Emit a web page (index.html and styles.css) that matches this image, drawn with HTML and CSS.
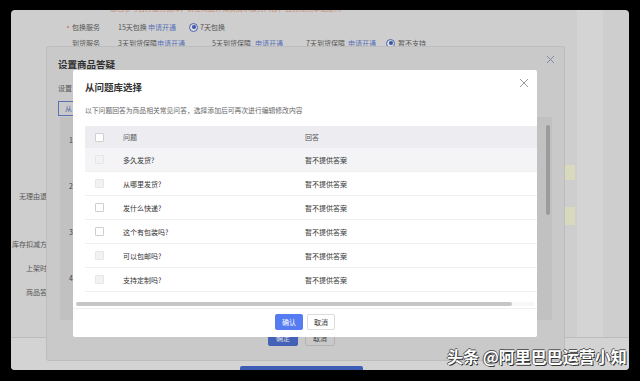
FILE: index.html
```html
<!DOCTYPE html>
<html lang="zh-CN">
<head>
    <meta charset="UTF-8">
    <meta name="viewport" content="width=device-width, initial-scale=1.0">
    <title>从问题库选择</title>
    <link rel="stylesheet" href="styles.css">
</head>
<body>
    <div class="screen">
        <div class="page">
            <div class="notice">您已参与官方服务保障，请在商品详情页展示服务内容，且需按照承诺履约</div>
            <div class="svc-row first">
                <span class="c w5 star"><i class="dot"></i></span>
                <span class="c w46">包换服务</span>
                <span class="c w30">15天包换</span>
                <span class="c w41 link">申请开通</span>
                <span class="c w11 radio-cell"><i class="radio"></i></span>
                <span class="c">7天包换</span>
            </div>
            <div class="svc-row">
                <span class="c w5"></span>
                <span class="c w46">到货服务</span>
                <span class="c w39">3天到货保障</span>
                <span class="c w55 link">申请开通</span>
                <span class="c w43">5天到货保障</span>
                <span class="c w51 link">申请开通</span>
                <span class="c w42">7天到货保障</span>
                <span class="c w38 link">申请开通</span>
                <span class="c w12 radio-cell"><i class="radio"></i></span>
                <span class="c">暂不支持</span>
            </div>
            <div class="form">
                <div class="labels">
                    <span class="l1">无理由退</span>
                    <span class="l2">库存扣减方</span>
                    <span>上架时</span>
                    <span>商品答</span>
                </div>
                <div class="tips">
                    <div class="tip t1"></div>
                    <div class="tip t2"></div>
                </div>
            </div>
            <div class="page-foot">
                <div class="page-btn"></div>
            </div>
        </div>

        <div class="qa">
            <div class="qa-head">
                <span class="qa-title">设置商品答疑</span>
                <svg class="qa-close" width="9" height="9" viewBox="0 0 9 9"><path d="M1 1L8 8M8 1L1 8" stroke="#7d88a3" stroke-width="1"/></svg>
            </div>
            <div class="qa-sub">设置</div>
            <div class="qa-from">从</div>
            <div class="qa-panel">
                <span class="num">1</span>
                <span class="num">2</span>
                <span class="num">3</span>
                <span class="num">4</span>
            </div>
            <div class="qa-foot">
                <span class="qa-btn primary">确定</span>
                <span class="qa-btn">取消</span>
            </div>
            <div class="qa-scroll"></div>
        </div>

        <div class="lib">
            <div class="lib-head">
                <span class="lib-title">从问题库选择</span>
                <svg class="lib-close" width="10" height="10" viewBox="0 0 10 10"><path d="M1 1L9 9M9 1L1 9" stroke="#9a9a9a" stroke-width="1"/></svg>
            </div>
            <div class="lib-desc">以下问题回答为商品相关常见问答，选择添加后可再次进行编辑修改内容</div>
            <div class="lib-table">
                <div class="tr head">
                    <span class="cell-check"><i class="box"></i></span>
                    <span class="cell-q">问题</span>
                    <span>回答</span>
                </div>
                <div class="tr hover">
                    <span class="cell-check"><i class="box off"></i></span>
                    <span class="cell-q">多久发货?</span>
                    <span>暂不提供答案</span>
                </div>
                <div class="tr">
                    <span class="cell-check"><i class="box off"></i></span>
                    <span class="cell-q">从哪里发货?</span>
                    <span>暂不提供答案</span>
                </div>
                <div class="tr">
                    <span class="cell-check"><i class="box"></i></span>
                    <span class="cell-q">发什么快递?</span>
                    <span>暂不提供答案</span>
                </div>
                <div class="tr">
                    <span class="cell-check"><i class="box"></i></span>
                    <span class="cell-q">这个有包装吗?</span>
                    <span>暂不提供答案</span>
                </div>
                <div class="tr">
                    <span class="cell-check"><i class="box off"></i></span>
                    <span class="cell-q">可以包邮吗?</span>
                    <span>暂不提供答案</span>
                </div>
                <div class="tr">
                    <span class="cell-check"><i class="box off"></i></span>
                    <span class="cell-q">支持定制吗?</span>
                    <span>暂不提供答案</span>
                </div>
            </div>
            <div class="lib-scroll"><div class="thumb"></div></div>
            <div class="lib-foot">
                <span class="btn primary">确认</span>
                <span class="btn">取消</span>
            </div>
        </div>
    </div>
    <div class="watermark">头条 @阿里巴巴运营小知</div>
</body>
</html>
```

FILE: styles.css
```css
* {
    box-sizing: border-box;
}
body {
    margin: 0;
    width: 640px;
    height: 381px;
    padding: 10px 11px 11px 11px;
    background-color: #000;
    font-family: "Noto Sans CJK SC", "Noto Sans", sans-serif;
    position: relative;
    overflow: hidden;
}
.screen {
    position: relative;
    width: 618px;
    height: 360px;
    border-radius: 4px;
    overflow: hidden;
}

/* dimmed page behind the dialogs */
.page {
    display: flex;
    flex-direction: column;
    height: 100%;
    font-size: 7px;
    color: #555;
    background: linear-gradient(to right, #cecece 566px, #d4d4d4 566px 592px, #cecece 592px);
}
.notice {
    margin: -7px 0 0 99px;
    height: 10px;
    line-height: 10px;
    color: #c58c70;
    white-space: nowrap;
}
.svc-row {
    display: flex;
    height: 16px;
    line-height: 16px;
    padding-left: 56px;
    white-space: nowrap;
}
.svc-row.first {
    margin-top: 6px;
}
.c {
    flex: none;
}
.w5 { width: 5px; }
.w11 { width: 11px; }
.w12 { width: 12px; }
.w30 { width: 30px; }
.w38 { width: 38px; }
.w39 { width: 39px; }
.w41 { width: 41px; }
.w42 { width: 42px; }
.w43 { width: 43px; }
.w46 { width: 46px; }
.w51 { width: 51px; }
.w55 { width: 55px; }
.star {
    display: flex;
    align-items: center;
}
.dot {
    width: 2px;
    height: 2px;
    border-radius: 50%;
    background: #c07a6a;
}
.link {
    color: #5a72b8;
}
.radio-cell {
    display: flex;
    align-items: center;
}
.radio {
    display: flex;
    align-items: center;
    justify-content: center;
    width: 9px;
    height: 9px;
    border: 1px solid #4a63b3;
    border-radius: 50%;
    background: #dcdcdc;
}
.radio::after {
    content: "";
    width: 4px;
    height: 4px;
    border-radius: 50%;
    background: #3b55a8;
}
.form {
    flex: 1;
    display: flex;
}
.labels {
    width: 36px;
    display: flex;
    flex-direction: column;
    align-items: flex-end;
}
.labels span {
    height: 12px;
    line-height: 12px;
    margin-top: 12px;
    white-space: nowrap;
}
.labels .l1 {
    margin-top: 139px;
}
.labels .l2 {
    margin-top: 36px;
}
.tips {
    margin-left: auto;
    margin-right: 54px;
    width: 12px;
    display: flex;
    flex-direction: column;
}
.tip {
    background: #d9d9bd;
}
.tip.t1 {
    margin-top: 114px;
    height: 15px;
}
.tip.t2 {
    margin-top: 27px;
    height: 18px;
}
.page-foot {
    height: 33px;
    border-top: 1px solid #bcbcbc;
    background: #d3d3d3;
    padding: 28px 0 0 229px;
}
.page-btn {
    width: 123px;
    height: 14px;
    background: #3d5cb5;
    border-radius: 2px;
}

/* first dialog */
.qa {
    position: absolute;
    left: 36px;
    top: 37px;
    width: 517px;
    height: 313px;
    padding: 0 11px;
    background: #c9c9c9;
    box-shadow: 0 0 0 1px #bdbdbd;
    border-radius: 2px;
    display: flex;
    flex-direction: column;
}
.qa-head {
    display: flex;
    justify-content: space-between;
    padding-top: 9px;
    height: 25px;
}
.qa-title {
    font-size: 9.5px;
    font-weight: bold;
    line-height: 16px;
    color: #2f2f2f;
}
.qa-close {
    margin: -1px -2px 0 0;
}
.qa-sub {
    margin-top: 10px;
    font-size: 7px;
    line-height: 12px;
    color: #555;
}
.qa-from {
    margin-top: 7px;
    width: 60px;
    height: 15px;
    padding-left: 6px;
    border: 1px solid #5a70b5;
    font-size: 7px;
    line-height: 13px;
    color: #4e66ad;
}
.qa-panel {
    margin: 1px 0 0 2px;
    width: 492px;
    height: 203px;
    padding-left: 9px;
    background: #c1c1c1;
    display: flex;
    flex-direction: column;
    font-size: 7px;
    color: #444;
}
.num {
    height: 46px;
    line-height: 46px;
}
.qa-foot {
    margin-top: 11px;
    padding-left: 210px;
    display: flex;
    gap: 7px;
}
.qa-btn {
    width: 30px;
    height: 15px;
    font-size: 7px;
    line-height: 13px;
    text-align: center;
    border: 1px solid #b3b3b3;
    border-radius: 2px;
    color: #444;
}
.qa-btn.primary {
    background: #4461b8;
    border-color: #4461b8;
    color: #ddd;
}
.qa-scroll {
    position: absolute;
    right: 14px;
    top: 78px;
    width: 4px;
    height: 90px;
    background: #9b9b9b;
    border-radius: 2px;
}

/* front dialog */
.lib {
    position: absolute;
    left: 62px;
    top: 60px;
    width: 464px;
    height: 267px;
    background: #fff;
    border-radius: 2px;
    display: flex;
    flex-direction: column;
}
.lib-head {
    display: flex;
    justify-content: space-between;
    padding: 9px 8px 0 12px;
    height: 25px;
}
.lib-title {
    font-size: 9.5px;
    font-weight: bold;
    line-height: 16px;
    color: #333;
}
.lib-close {
    margin-top: -1px;
}
.lib-desc {
    margin: 10px 0 0 12px;
    font-size: 6.8px;
    line-height: 10px;
    color: #666;
    white-space: nowrap;
}
.lib-table {
    margin: 11px 0 0 12px;
    overflow: hidden;
}
.tr {
    display: flex;
    align-items: center;
    height: 24px;
    border-bottom: 1px solid #efefef;
    font-size: 7px;
    color: #333;
    white-space: nowrap;
}
.tr.head {
    height: 22px;
    background: #ededf1;
    border-bottom: none;
    color: #555;
}
.tr.hover {
    background: #f4f4f7;
}
.cell-check {
    width: 38px;
    padding-left: 10px;
    display: flex;
}
.cell-q {
    width: 182px;
}
.box {
    width: 9px;
    height: 9px;
    border: 1px solid #cfcfcf;
    border-radius: 1px;
    background: #fff;
}
.box.off {
    background: #f2f2f2;
    border-color: #e6e6e6;
}
.lib-scroll {
    margin: 10px 3px 0 3px;
    height: 4px;
    background: #f7f7f7;
}
.lib-scroll .thumb {
    width: 436px;
    height: 4px;
    background: #c6c6c6;
    border-radius: 2px;
}
.lib-foot {
    margin-top: 2px;
    border-top: 1px solid #f0f0f0;
    padding: 5px 0 0 202px;
    display: flex;
    gap: 4px;
}
.btn {
    width: 28px;
    height: 16px;
    font-size: 7px;
    line-height: 14px;
    text-align: center;
    border: 1px solid #dcdcdc;
    border-radius: 2px;
    color: #333;
    background: #fff;
}
.btn.primary {
    background: #557cf0;
    border-color: #557cf0;
    color: #fff;
}

.watermark {
    position: absolute;
    left: 447px;
    top: 346px;
    font-size: 16px;
    line-height: 20px;
    font-weight: bold;
    color: #fff;
    white-space: nowrap;
    text-shadow: 1px 1px 0 #333, -1px 0 0 #555, 0 -1px 0 #555;
}
```
